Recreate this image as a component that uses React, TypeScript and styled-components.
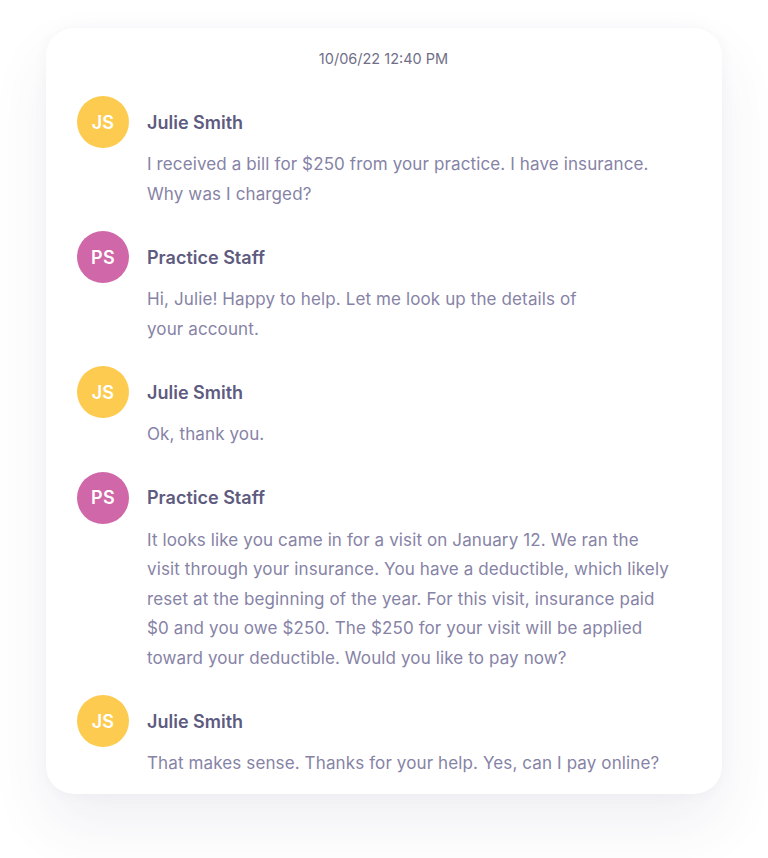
import React from "react";
import styled, { createGlobalStyle } from "styled-components";

const Global = createGlobalStyle`
  html, body { margin: 0; padding: 0; background: #ffffff; }
  body { font-family: Inter, "Noto Sans", sans-serif; -webkit-font-smoothing: antialiased; }
`;

const Page = styled.div`
  display: flex;
  justify-content: center;
  align-items: flex-start;
  box-sizing: border-box;
  min-height: 100vh;
  padding: 28px 0 60px;
`;

const Card = styled.div`
  width: 676px;
  box-sizing: border-box;
  background: #ffffff;
  border-radius: 28px;
  padding: 21px 32px 15px 31px;
  box-shadow: 0 30px 60px rgba(60, 60, 110, 0.08), 0 0 16px rgba(60, 60, 110, 0.035);
`;

const Stamp = styled.div`
  text-align: center;
  font-size: 14.5px;
  line-height: 20px;
  color: #716f88;
  margin-bottom: 27px;
`;

const List = styled.div`
  display: flex;
  flex-direction: column;
  gap: 22px;
`;

const Row = styled.div`
  display: flex;
  gap: 18px;
`;

const Avatar = styled.div<{ $tone: string }>`
  flex: none;
  width: 52px;
  height: 52px;
  border-radius: 50%;
  background: ${(p) => p.$tone};
  color: #ffffff;
  display: flex;
  align-items: center;
  justify-content: center;
  font-size: 18px;
  font-weight: 600;
  letter-spacing: 0.3px;
`;

const Body = styled.div`
  display: flex;
  flex-direction: column;
`;

const Name = styled.div`
  height: 52px;
  display: flex;
  align-items: center;
  font-size: 18px;
  font-weight: 600;
  color: #5e5b80;
`;

const Text = styled.div`
  max-width: 528px;
  margin-top: 2px;
  font-size: 17px;
  letter-spacing: 0.12px;
  line-height: 29.5px;
  color: #8683a6;
`;

const YELLOW = "#fdcb50";
const PINK = "#d067a8";

type Msg = { who: "JS" | "PS"; text: React.ReactNode };

const msgs: Msg[] = [
  { who: "JS", text: "I received a bill for $250 from your practice. I have insurance. Why was I charged?" },
  { who: "PS", text: <>Hi, Julie! Happy to help. Let me look up the details of<br />your account.</> },
  { who: "JS", text: "Ok, thank you." },
  {
    who: "PS",
    text: "It looks like you came in for a visit on January 12. We ran the visit through your insurance. You have a deductible, which likely reset at the beginning of the year. For this visit, insurance paid $0 and you owe $250. The $250 for your visit will be applied toward your deductible. Would you like to pay now?",
  },
  { who: "JS", text: "That makes sense. Thanks for your help. Yes, can I pay online?" },
];

export default function App() {
  return (
    <>
      <Global />
      <Page>
        <Card>
          <Stamp>10/06/22 12:40 PM</Stamp>
          <List>
            {msgs.map((m, i) => (
              <Row key={i}>
                <Avatar $tone={m.who === "JS" ? YELLOW : PINK}>{m.who}</Avatar>
                <Body>
                  <Name>{m.who === "JS" ? "Julie Smith" : "Practice Staff"}</Name>
                  <Text>{m.text}</Text>
                </Body>
              </Row>
            ))}
          </List>
        </Card>
      </Page>
    </>
  );
}
